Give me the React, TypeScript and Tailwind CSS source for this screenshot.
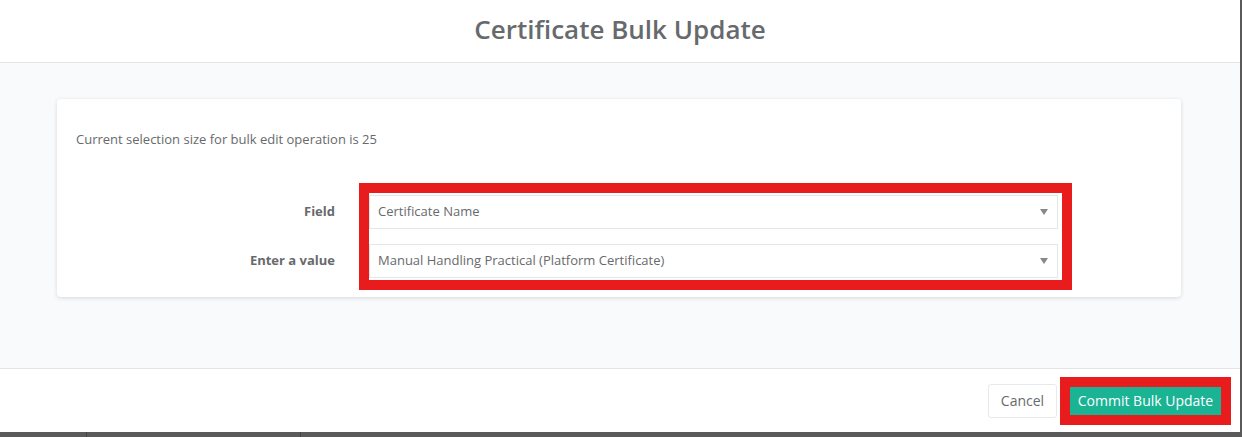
import React from 'react';

const font = { fontFamily: '"Open Sans", "Noto Sans", sans-serif' };

function SelectBox({ value }: { value: string }) {
  return (
    <div className="flex h-[34px] w-[689px] items-center justify-between border border-[#e5e6e7] bg-white pl-[8px] pr-[9px]">
      <span className="text-[13px] text-[#676a6c]">{value}</span>
      <svg width="8" height="6" viewBox="0 0 8 6">
        <path d="M0 0 H8 L4 6 Z" fill="#888888" />
      </svg>
    </div>
  );
}

export default function App() {
  return (
    <div className="flex h-[437px] w-[1242px] flex-col overflow-hidden bg-[#5a5a5a]" style={font}>
      <div className="flex h-[432px] w-[1240px] flex-col bg-white">
        {/* header */}
        <div className="flex h-[63px] items-center justify-center border-b border-[#e5e5e5] pb-[4px]">
          <h4 className="text-[26px] font-semibold text-[#676a6c]">Certificate Bulk Update</h4>
        </div>

        {/* body */}
        <div className="h-[305px] bg-[#f8fafb] pl-[57px] pt-[36px]">
          <div className="h-[198px] w-[1124px] rounded-[4px] bg-white pl-[19px] pt-[31px] shadow-[0_1px_4px_rgba(0,0,0,0.14)]">
            <p className="text-[13px] leading-[18px] text-[#676a6c]">
              Current selection size for bulk edit operation is 25
            </p>

            <div className="mt-[35px] flex">
              <div className="flex w-[259px] flex-col gap-[15px] pt-[12px] text-right text-[13px] font-bold text-[#676a6c]">
                <label className="flex h-[34px] items-center justify-end">Field</label>
                <label className="flex h-[34px] items-center justify-end">Enter a value</label>
              </div>
              <div className="ml-[24px] flex flex-col gap-[15px] border-[10px] border-[#e81c1c] pb-[2px] pr-[4px] pt-[2px]">
                <SelectBox value="Certificate Name" />
                <SelectBox value="Manual Handling Practical (Platform Certificate)" />
              </div>
            </div>
          </div>
        </div>

        {/* footer */}
        <div className="flex flex-1 items-center justify-end border-t border-[#e5e5e5] pr-[9px]">
          <button className="h-[34px] w-[69px] rounded-[3px] border border-[#e7eaec] bg-white text-[14px] text-[#676a6c]">
            Cancel
          </button>
          <div className="ml-[3px] border-[10px] border-[#e81c1c]">
            <button className="flex h-[28px] w-[151px] items-center justify-center bg-[#1ab394] text-[14px] text-white">
              Commit Bulk Update
            </button>
          </div>
        </div>
      </div>
      <div className="flex flex-1">
        <div className="w-[87px] border-r border-[#444]" />
        <div className="w-[214px] border-r border-[#444]" />
        <div className="flex-1" />
      </div>
    </div>
  );
}
